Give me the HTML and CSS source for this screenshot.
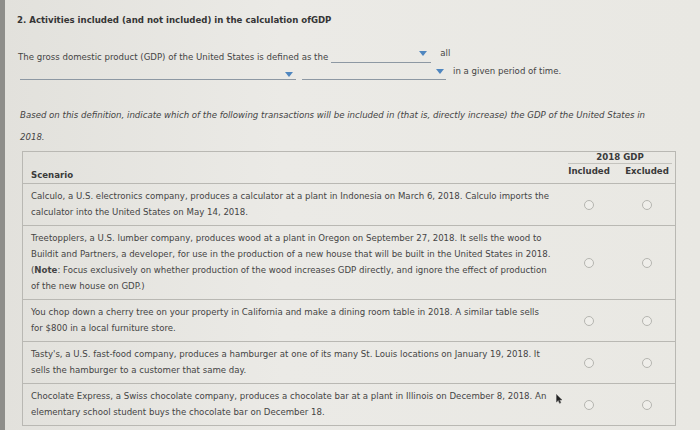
FILE: index.html
```html
<!DOCTYPE html>
<html>
<head>
<meta charset="utf-8">
<link rel="stylesheet" href="styles.css">
</head>
<body>
<div class="page">
  <h2 class="title">2. Activities included (and not included) in the calculation ofGDP</h2>

  <div class="def">
    <div class="line line1">
      <span class="txt">The gross domestic product (GDP) of the United States is defined as the</span>
      <span class="blank b1"><span class="tri"></span></span>
      <span class="opt">all</span>
    </div>
    <div class="line line2">
      <span class="blank b2"><span class="tri"></span></span>
      <span class="blank b3"><span class="tri"></span></span>
      <span class="opt">in a given period of time.</span>
    </div>
  </div>

  <p class="instr">Based on this definition, indicate which of the following transactions will be included in (that is, directly increase) the GDP of the United States in<br>2018.</p>

  <table class="grid">
    <thead>
      <tr class="h1">
        <th class="sc"></th>
        <th colspan="2" class="gdp"><span>2018 GDP</span></th>
      </tr>
      <tr class="h2">
        <th class="sc">Scenario</th>
        <th class="col">Included</th>
        <th class="col">Excluded</th>
      </tr>
    </thead>
    <tbody>
      <tr>
        <td class="sc">Calculo, a U.S. electronics company, produces a calculator at a plant in Indonesia on March 6, 2018. Calculo imports the<br>calculator into the United States on May 14, 2018.</td>
        <td class="rc inc"><span class="radio"></span></td>
        <td class="rc exc"><span class="radio"></span></td>
      </tr>
      <tr>
        <td class="sc">Treetopplers, a U.S. lumber company, produces wood at a plant in Oregon on September 27, 2018. It sells the wood to<br>Buildit and Partners, a developer, for use in the production of a new house that will be built in the United States in 2018.<br>(<b>Note</b>: Focus exclusively on whether production of the wood increases GDP directly, and ignore the effect of production<br>of the new house on GDP.)</td>
        <td class="rc inc"><span class="radio"></span></td>
        <td class="rc exc"><span class="radio"></span></td>
      </tr>
      <tr>
        <td class="sc">You chop down a cherry tree on your property in California and make a dining room table in 2018. A similar table sells<br>for $800 in a local furniture store.</td>
        <td class="rc inc"><span class="radio"></span></td>
        <td class="rc exc"><span class="radio"></span></td>
      </tr>
      <tr>
        <td class="sc">Tasty's, a U.S. fast-food company, produces a hamburger at one of its many St. Louis locations on January 19, 2018. It<br>sells the hamburger to a customer that same day.</td>
        <td class="rc inc"><span class="radio"></span></td>
        <td class="rc exc"><span class="radio"></span></td>
      </tr>
      <tr>
        <td class="sc">Chocolate Express, a Swiss chocolate company, produces a chocolate bar at a plant in Illinois on December 8, 2018. An<br>elementary school student buys the chocolate bar on December 18.</td>
        <td class="rc inc"><span class="radio"></span></td>
        <td class="rc exc"><span class="radio"></span></td>
      </tr>
    </tbody>
  </table>

  <svg class="cursor" width="7" height="10" viewBox="0 0 7 10">
    <path d="M0.5 0.5 L0.5 8 L2.3 6.3 L3.6 9.3 L4.8 8.8 L3.6 5.9 L6 5.9 Z" fill="#222" stroke="#555" stroke-width="0.6"/>
  </svg>
</div>
</body>
</html>
```
FILE: styles.css
```css
html, body {
  margin: 0;
  padding: 0;
}
body {
  width: 700px;
  height: 430px;
  overflow: hidden;
  background: #e8e7e2;
  font-family: "DejaVu Sans", Verdana, sans-serif;
  color: #444;
}
.page {
  position: relative;
  box-sizing: border-box;
  height: 430px;
  border-left: 5px solid #8e8e8a;
  padding: 15px 0 0 12px;
  background: linear-gradient(90deg, #e2e1dc 0, #ebeae6 40%, #e9e8e3 100%);
}
.title {
  margin: 0;
  font-size: 8.6px;
  font-weight: bold;
  line-height: 11px;
  color: #353535;
}
.def {
  margin-top: 22px;
  font-size: 8.6px;
}
.line {
  display: flex;
  align-items: flex-end;
  white-space: nowrap;
}
.line1 {
  height: 15px;
}
.line1 .txt {
  padding-bottom: 1px;
  margin-left: 1px;
}
.line2 {
  margin-top: 3px;
  height: 14px;
}
.blank {
  position: relative;
  display: inline-block;
  height: 12px;
  border-bottom: 1px solid #8d98a3;
}
.b1 {
  width: 100px;
  margin-left: 3px;
}
.b2 {
  width: 276px;
  margin-left: 3px;
}
.b3 {
  width: 144px;
  margin-left: 6px;
}
.tri {
  position: absolute;
  right: 4px;
  top: 1px;
  width: 0;
  height: 0;
  border-left: 4px solid transparent;
  border-right: 4px solid transparent;
  border-top: 5px solid #4f86bf;
}
.b2 .tri { right: 3px; top: 5px; }
.b3 .tri { right: 2px; top: 2px; }
.opt {
  margin-left: 9px;
  align-self: flex-start;
  line-height: 11px;
}
.line2 .opt {
  margin-left: 7px;
  margin-top: 0;
}
.instr {
  margin: 24px 0 0 3px;
  font-size: 8.6px;
  font-style: italic;
  line-height: 22px;
}
.grid {
  margin: 3px 0 0 5px;
  width: 654px;
  border-collapse: collapse;
  border: 1px solid #b9b8b3;
  font-size: 8.6px;
}
.grid th {
  font-weight: bold;
  color: #3a3a3a;
  padding: 0;
}
.h1 th {
  height: 10px;
  vertical-align: bottom;
}
.h1 .gdp span {
  display: block;
  margin: 0 3px 0 9px;
  padding-bottom: 1px;
  border-bottom: 1px solid #c4c3be;
  text-align: center;
  line-height: 10px;
}
.h2 th {
  height: 17px;
  line-height: 12px;
  border-bottom: 1px solid #b9b8b3;
}
.h2 .sc {
  text-align: left;
  vertical-align: bottom;
  padding: 0 0 2px 8px;
}
.h2 .col {
  text-align: center;
  vertical-align: top;
  padding-top: 1px;
}
.grid td {
  border-top: 1px solid #b9b8b3;
  padding: 0;
}
.grid td.sc {
  padding: 4px 0 5px 8px;
  line-height: 16px;
  white-space: nowrap;
}
.grid .inc, .h2 .col:nth-child(2) {
  width: 60px;
}
.grid .exc, .h2 .col:nth-child(3) {
  width: 56px;
}
.grid td.rc {
  text-align: center;
  vertical-align: middle;
}
.radio {
  display: inline-block;
  width: 8px;
  height: 8px;
  border: 1px solid #b5b5b0;
  border-radius: 50%;
  background: #efeeea;
  vertical-align: middle;
}
.cursor {
  position: absolute;
  left: 551px;
  top: 394px;
}
```
